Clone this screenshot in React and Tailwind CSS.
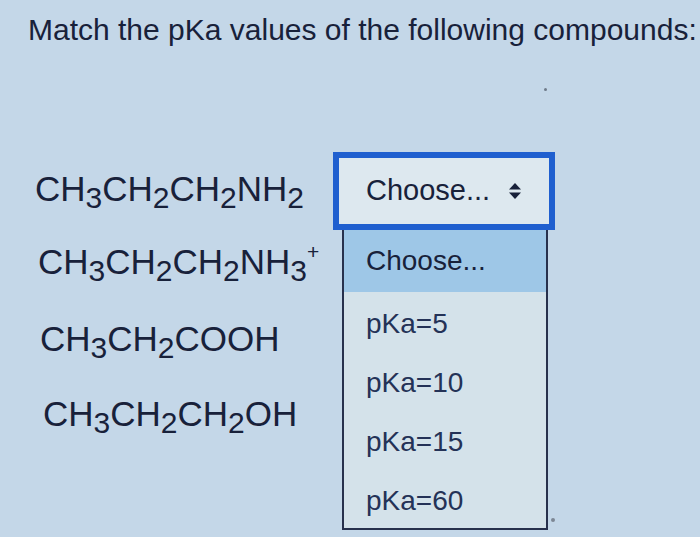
import React from "react";

const compounds = [
  { parts: ["CH", "3", "CH", "2", "CH", "2", "NH", "2"], ml: "ml-[35px]" },
  { parts: ["CH", "3", "CH", "2", "CH", "2", "NH", "3"], plus: true, ml: "ml-[38px]" },
  { parts: ["CH", "3", "CH", "2", "COOH"], ml: "ml-[40px]" },
  { parts: ["CH", "3", "CH", "2", "CH", "2", "OH"], ml: "ml-[43px]" },
];

const options = ["pKa=5", "pKa=10", "pKa=15", "pKa=60"];

function Formula({ parts, plus }) {
  return (
    <span className="whitespace-nowrap">
      {parts.map((p, i) =>
        /\d/.test(p) ? (
          <span key={i} className="relative top-[7px] text-[30px]">
            {p}
          </span>
        ) : (
          <span key={i}>{p}</span>
        )
      )}
      {plus && <span className="relative -top-[15px] text-[21px]">+</span>}
    </span>
  );
}

function UpDown() {
  return (
    <svg width="12" height="16" viewBox="0 0 12 16" className="text-[#18213a]">
      <path d="M6 0 L12 6.5 H0 Z" fill="currentColor" />
      <path d="M6 16 L12 9.5 H0 Z" fill="currentColor" />
    </svg>
  );
}

export default function App() {
  return (
    <div
      className="relative w-[700px] h-[537px] overflow-hidden bg-[#c4d7e8] text-[#18213a]"
      style={{ fontFamily: '"Liberation Sans", Arial, sans-serif' }}
    >
      <h1 className="pl-[28px] pt-[13px] text-[30px] leading-[34px] font-normal">
        Match the pKa values of the following compounds:
      </h1>

      <div className="mt-[105px] flex">
        {/* compounds column */}
        <div className="w-[333px] flex flex-col text-[35px] leading-[40px]">
          {compounds.map((c, i) => (
            <div key={i} className={`h-[75px] flex items-center ${c.ml}`}>
              <Formula parts={c.parts} plus={c.plus} />
            </div>
          ))}
        </div>

        {/* select with open list */}
        <div className="w-[222px] flex flex-col">
          <div className="h-[78px] border-[6px] border-[#1f5fcf] bg-[#dde8ef] flex items-center pl-[27px] pr-[28px]">
            <span className="flex-1 text-[29px]">Choose...</span>
            <UpDown />
          </div>
          <div className="ml-[9px] w-[206px] h-[300px] border-2 border-t-0 border-[#27314d] bg-[#d4e2ea] text-[28px] text-[#243257]">
            <div className="h-[62px] bg-[#9ec7e7] flex items-center pl-[22px] text-[#18213a]">
              Choose...
            </div>
            {options.map((o) => (
              <div key={o} className="h-[59px] pt-[4px] flex items-center pl-[22px]">
                {o}
              </div>
            ))}
          </div>
        </div>
      </div>

      <span className="absolute left-[551px] top-[518px] w-[4px] h-[4px] rounded-full bg-[#7d8794]" />
      <span className="absolute left-[544px] top-[88px] w-[3px] h-[3px] rounded-full bg-[#6f7b8a]" />
    </div>
  );
}
